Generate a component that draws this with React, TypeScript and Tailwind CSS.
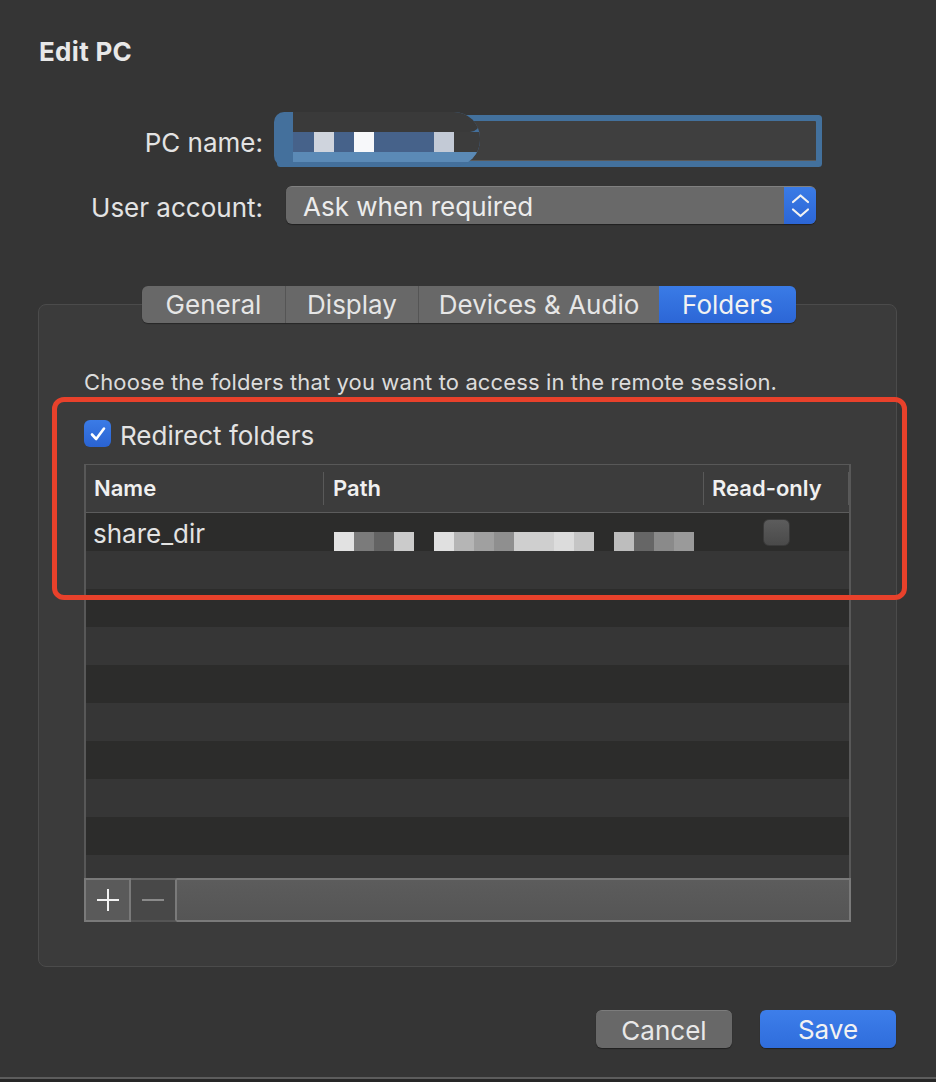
import React from 'react';

const tabs = [
  { label: 'General', width: 'w-[143px]', active: false },
  { label: 'Display', width: 'w-[133px]', active: false },
  { label: 'Devices & Audio', width: 'w-[241px]', active: false },
  { label: 'Folders', width: 'w-[137px]', active: true },
];

// pixelated path redaction, 20px squares
const pathBlocks: string[][] = [
  ['#e2e2e2', '#7b7b7b', '#636363', '#cbcbcb'],
  ['#e0e0e0', '#b5b5b5', '#a0a0a0', '#8f8f8f', '#cfcfcf', '#cfcfcf', '#dcdcdc', '#c5c5c5'],
  ['#bdbdbd', '#666666', '#8a8a8a', '#9a9a9a'],
];

const Checkbox = ({ checked }: { checked: boolean }) =>
  checked ? (
    <div className="w-[27px] h-[27px] rounded-[6px] bg-gradient-to-b from-[#3b7be6] to-[#2a63d2] flex items-center justify-center shrink-0">
      <svg width="20" height="20" viewBox="0 0 20 20" fill="none">
        <path d="M4 10.5 L8.2 15 L16 4.5" stroke="#ffffff" strokeWidth="2.6" strokeLinecap="round" strokeLinejoin="round" />
      </svg>
    </div>
  ) : (
    <div className="w-[27px] h-[27px] rounded-[6px] bg-gradient-to-b from-[#5c5c5c] to-[#4a4a4a] border border-[#3a3a3a] shrink-0" />
  );

const FolderRow = ({ index }: { index: number }) => {
  const dark = index % 2 === 0;
  return (
    <div className={`flex h-[38px] shrink-0 ${dark ? 'bg-[#2c2c2b]' : 'bg-[#363636]'}`}>
      {index === 0 && (
        <>
          <div className="w-[238px] pl-[7px] pt-[4px] text-[26px] leading-[34px] text-[#e3e3e3]">share_dir</div>
          <div className="w-[380px] pl-[10px] pt-[19px] flex gap-[20px]">
            {pathBlocks.map((group, gi) => (
              <div key={gi} className="flex h-[20px]">
                {group.map((c, bi) => (
                  <div key={bi} className="w-[20px] h-[20px]" style={{ backgroundColor: c }} />
                ))}
              </div>
            ))}
          </div>
          <div className="w-[145px] flex items-center justify-center">
            <Checkbox checked={false} />
          </div>
        </>
      )}
    </div>
  );
};

export default function App() {
  return (
    <div className="w-[936px] h-[1082px] bg-[#353535] relative overflow-hidden flex flex-col font-['Inter',sans-serif] text-[#e3e3e3]">
      <h1 className="pl-[39px] pt-[36px] text-[26px] font-bold leading-[32px] tracking-[0.3px] text-[#e8e8e8]">Edit PC</h1>

      {/* PC name */}
      <div className="mt-[53px] flex items-center h-[40px]">
        <div className="w-[263px] text-right text-[26px] leading-[32px] pt-[4px]">PC name:</div>
        <div className="relative ml-[20px] w-[533px] h-[40px] bg-[#3f3f3f] border-b border-[#5a5a5a] ring-[6px] ring-[#43719d] rounded-[1px]">
          {/* scribbled redaction */}
          <div className="absolute left-[-9px] top-[-9px] w-[206px] h-[54px] rounded-l-[10px] rounded-r-[26px] bg-[#44709c] overflow-hidden flex">
            <div className="w-[19px] shrink-0" />
            <div className="flex-1 flex flex-col">
              <div className="h-[20px] bg-[#3a3a3a] rounded-r-[20px]" />
              <div className="h-[20px] flex bg-[#46628a]">
                <div className="w-[21px]" />
                <div className="w-[20px] bg-[#cfd4dd]" />
                <div className="w-[20px]" />
                <div className="w-[20px] bg-[#f7f8fa]" />
                <div className="w-[60px]" />
                <div className="w-[20px] bg-[#c3cad6]" />
                <div className="flex-1 bg-[#3c3c3c]" />
              </div>
              <div className="h-[10px] bg-[#5b8ab6] rounded-r-[20px]" />
            </div>
          </div>
        </div>
      </div>

      {/* User account */}
      <div className="mt-[25px] flex items-center h-[38px]">
        <div className="w-[263px] text-right text-[26px] leading-[32px] pt-[5px]">User account:</div>
        <div className="ml-[23px] w-[530px] h-[38px] rounded-[6px] bg-[#696969] border-t border-[#808080] shadow-[0_1px_1px_rgba(0,0,0,0.4)] flex overflow-hidden">
          <div className="flex-1 pl-[17px] pt-[2px] text-[26px] leading-[35px] text-[#ececec]">Ask when required</div>
          <div className="w-[32px] bg-gradient-to-b from-[#3a7be6] to-[#2c66d6] flex items-center justify-center">
            <svg width="32" height="38" viewBox="0 0 32 38" fill="none">
              <path d="M9 15 L16.5 8.5 L24 15" stroke="#f2f2f2" strokeWidth="2.2" strokeLinecap="round" strokeLinejoin="round" />
              <path d="M9 22.5 L16.5 29 L24 22.5" stroke="#f2f2f2" strokeWidth="2.2" strokeLinecap="round" strokeLinejoin="round" />
            </svg>
          </div>
        </div>
      </div>

      {/* Tabs */}
      <div className="mt-[62px] ml-[142px] relative z-10 flex h-[37px] rounded-[6px] overflow-hidden w-fit shadow-[0_1px_1px_rgba(0,0,0,0.35)]">
        {tabs.map((t, i) => (
          <div
            key={t.label}
            className={`${t.width} h-full flex items-center justify-center text-[26px] ${
              t.active ? 'bg-gradient-to-b from-[#3a7be6] to-[#2c66d6] text-[#f2f2f2]' : 'bg-[#686868] text-[#e6e6e6]'
            } ${i > 0 && !t.active ? 'border-l border-[#555555]' : ''}`}
          >
            {t.label}
          </div>
        ))}
      </div>

      {/* Tab box */}
      <div className="ml-[38px] -mt-[19px] w-[859px] h-[663px] border border-[#4b4b4b] rounded-[8px] bg-[#3b3b3b] px-[45px] pt-[63px] flex flex-col">
        <p className="text-[22px] leading-[28px] tracking-[0.12px] text-[#dcdcdc]">Choose the folders that you want to access in the remote session.</p>

        <div className="mt-[24px] h-[27px] flex items-center gap-[9px]">
          <Checkbox checked />
          <span className="text-[26px] leading-[32px] pt-[4px]">Redirect folders</span>
        </div>

        <div className="mt-[17px] flex flex-col">
          <div className="border-t border-x-2 border-[#585858] flex flex-col">
            <div className="h-[48px] border-b border-[#5c5c5c] bg-[#3c3c3c] flex items-center text-[22px] font-semibold text-[#f0f0f0]">
              <div className="w-[237px] pl-[8px]">Name</div>
              <div className="w-px h-[33px] bg-[#595959]" />
              <div className="w-[379px] pl-[9px]">Path</div>
              <div className="w-px h-[33px] bg-[#595959]" />
              <div className="w-[144px] pl-[8px]">Read-only</div>
              <div className="w-px h-[33px] bg-[#595959]" />
            </div>
            <div className="h-[365px] overflow-hidden flex flex-col">
              {Array.from({ length: 10 }).map((_, i) => (
                <FolderRow key={i} index={i} />
              ))}
            </div>
          </div>
          <div className="h-[44px] flex">
            <div className="w-[47px] h-full bg-[#5a5a5a] border-2 border-[#7a7a7a] flex items-center justify-center">
              <svg width="24" height="24" viewBox="0 0 24 24">
                <path d="M12 1 V23 M1 12 H23" stroke="#f2f2f2" strokeWidth="2" />
              </svg>
            </div>
            <div className="w-[46px] h-full bg-[#484848] border-y-2 border-r-2 border-t-[#666666] border-b-[#555555] border-r-[#7a7a7a] flex items-center justify-center">
              <svg width="24" height="24" viewBox="0 0 24 24">
                <path d="M1 12 H23" stroke="#8a8a8a" strokeWidth="2" />
              </svg>
            </div>
            <div className="flex-1 h-full bg-gradient-to-b from-[#5c5c5c] to-[#555555] border-y-2 border-r-2 border-[#7a7a7a]" />
          </div>
        </div>
      </div>

      {/* Buttons */}
      <div className="mt-[43px] pr-[40px] flex justify-end gap-[28px]">
        <button className="w-[136px] h-[38px] rounded-[6px] bg-[#686868] border-t border-[#7c7c7c] shadow-[0_1px_1px_rgba(0,0,0,0.4)] text-[26px] text-[#e8e8e8]">
          Cancel
        </button>
        <button className="w-[136px] h-[38px] rounded-[6px] bg-gradient-to-b from-[#3d7eea] to-[#2f6ddc] shadow-[0_1px_1px_rgba(0,0,0,0.4)] text-[26px] text-[#f2f2f2]">
          Save
        </button>
      </div>

      <div className="mt-auto h-[5px] border-t-2 border-[#5c5c5c] bg-[#262626]" />

      {/* red annotation frame */}
      <div className="absolute left-[52px] top-[397px] w-[855px] h-[203px] border-[5px] border-[#e8412b] rounded-[12px] pointer-events-none" />
    </div>
  );
}
